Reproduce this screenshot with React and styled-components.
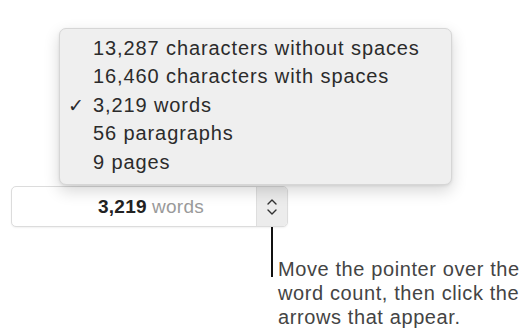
import React from 'react';
import styled, {createGlobalStyle} from 'styled-components';

// ========== Global ========== //
const GlobalStyle = createGlobalStyle`
	html, body {
		margin: 0;
		padding: 0;
		background: #ffffff;
	}
	body {
		font-family: "Liberation Sans", Arial, Helvetica, sans-serif;
	}
`;

// ========== Styled Components ========== //
const Page = styled.div`
	width: 528px;
	height: 336px;
	overflow: hidden;
	display: flex;
	flex-direction: column;
	padding-top: 28px;
	box-sizing: border-box;
`;

const Menu = styled.ul`
	list-style: none;
	margin: 0 0 0 59px;
	padding: 5px 0 0 0;
	width: 393px;
	height: 157px;
	box-sizing: border-box;
	background-color: #efefef;
	border: 1px solid #d6d6d6;
	border-radius: 7px;
	box-shadow: 0 6px 16px rgba(0, 0, 0, 0.16), 0 1px 3px rgba(0, 0, 0, 0.08);
	position: relative;
	z-index: 1;
`;

const MenuItem = styled.li`
	display: flex;
	align-items: center;
	height: 28.5px;
	font-size: 20px;
	letter-spacing: 0.9px;
	color: #2b2b2b;
	white-space: nowrap;
`;

const Check = styled.span`
	width: 33px;
	padding-left: 8px;
	box-sizing: border-box;
	font-family: "DejaVu Sans", sans-serif;
	font-size: 19px;
	letter-spacing: 0;
	visibility: ${props => props.on ? 'visible' : 'hidden'};
`;

const CountBox = styled.div`
	margin: 1px 0 0 11px;
	width: 277px;
	height: 41px;
	box-sizing: border-box;
	display: flex;
	background: #ffffff;
	border: 1px solid #dcdcdc;
	border-radius: 5px;
	box-shadow: 0 1px 2px rgba(0, 0, 0, 0.06);
	overflow: hidden;
`;

const CountLabel = styled.div`
	flex: 1;
	display: flex;
	align-items: center;
	justify-content: center;
	padding-left: 34px;
	font-size: 19px;
	letter-spacing: 0.3px;
	color: #9a9a9a;
	b {
		color: #222;
		font-weight: bold;
		margin-right: 5px;
	}
`;

const Stepper = styled.div`
	width: 30px;
	border-left: 1px solid #dedede;
	background: #ececec;
	display: flex;
	align-items: center;
	justify-content: center;
`;

const Callout = styled.div`
	display: flex;
	margin-left: 271px;
`;

const Pointer = styled.div`
	width: 2px;
	height: 50px;
	background: #111;
	flex-shrink: 0;
`;

const CalloutText = styled.p`
	margin: 30px 0 0 5px;
	font-size: 20px;
	letter-spacing: 0.6px;
	line-height: 24px;
	color: #444;
	width: 250px;
`;

// ========== React Function Component ========== //
const items = [
	'13,287 characters without spaces',
	'16,460 characters with spaces',
	'3,219 words',
	'56 paragraphs',
	'9 pages',
];

const App = () => {
	return (
		<>
			<GlobalStyle/>
			<Page>
				<Menu>
					{items.map((item, i) => (
						<MenuItem key={item}>
							<Check on={i === 2 ? 1 : 0}>✓</Check>
							{item}
						</MenuItem>
					))}
				</Menu>

				<CountBox>
					<CountLabel><b>3,219</b>words</CountLabel>
					<Stepper>
						<svg width="12" height="20" viewBox="0 0 12 20" fill="none" stroke="#333" strokeWidth="1.4" strokeLinecap="round" strokeLinejoin="round">
							<path d="M2 7 L6 3 L10 7"/>
							<path d="M2 13 L6 17 L10 13"/>
						</svg>
					</Stepper>
				</CountBox>

				<Callout>
					<Pointer/>
					<CalloutText>
						Move the pointer over the word count, then click the arrows that appear.
					</CalloutText>
				</Callout>
			</Page>
		</>
	);
}

export default App;
